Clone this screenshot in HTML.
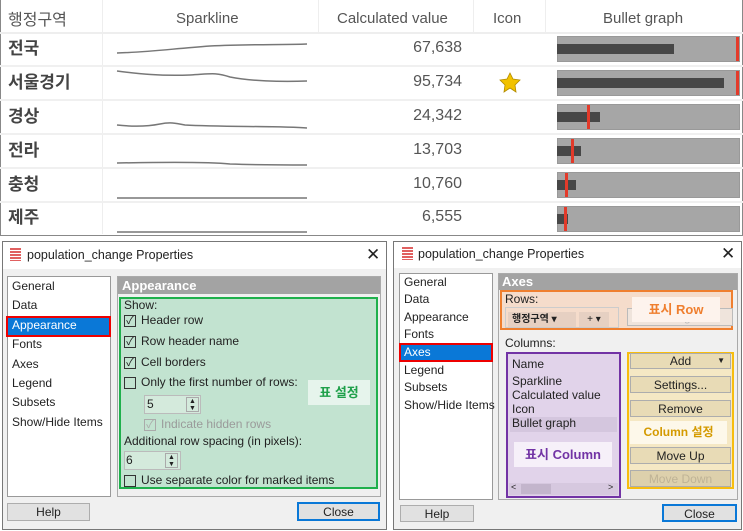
<!DOCTYPE html>
<html><head><meta charset="utf-8"><style>
*{box-sizing:border-box;margin:0;padding:0}
body{width:743px;height:531px;background:#fff;position:relative;overflow:hidden;font-family:"Liberation Sans","Noto Sans CJK KR",sans-serif;font-size:12px;color:#222}
.a{position:absolute}
.t{position:absolute;white-space:nowrap;line-height:1}
.hd{font-size:15px;color:#555;font-family:"Liberation Sans Narrow","Liberation Sans",sans-serif}
.rh{font-size:17px;font-weight:bold;color:#444;font-family:"Noto Sans CJK KR",sans-serif}
.val{font-size:16px;color:#555;text-align:right;width:120px;left:342px}
.bg{position:absolute;left:557px;width:183px;height:26px;background:#a6a6a6;border:1px solid #999}
.bar{position:absolute;left:557px;height:10px;background:#474747}
.red{position:absolute;width:3px;height:24px;background:#e33a2a}
.win{position:absolute;border:1px solid #777;background:#f0f0f0}
.list{position:absolute;background:#fff;border:1px solid #999}
.btn{position:absolute;background:#e1e1e1;border:1px solid #adadad;text-align:center;font-size:12px;line-height:16px}
.cb{position:absolute;width:12px;height:12px;border:1px solid #333;background:transparent;font-size:11px;line-height:10px;text-align:center}
</style></head><body>
<!-- top table -->
<div class="a" style="left:0;top:0;width:743px;height:236px;border:1px solid #888;border-top:none"></div>
<div class="a" style="left:102px;top:0;width:1px;height:234px;background:#eee"></div>
<div class="a" style="left:318px;top:0;width:1px;height:32px;background:#eee"></div>
<div class="a" style="left:473px;top:0;width:1px;height:32px;background:#eee"></div>
<div class="a" style="left:545px;top:0;width:1px;height:32px;background:#eee"></div>
<div class="a" style="left:0;top:32px;width:743px;height:2px;background:#eee"></div>
<div class="a" style="left:0;top:65px;width:743px;height:2px;background:#f0f0f0"></div>
<div class="a" style="left:0;top:99px;width:743px;height:2px;background:#f0f0f0"></div>
<div class="a" style="left:0;top:133px;width:743px;height:2px;background:#f0f0f0"></div>
<div class="a" style="left:0;top:167px;width:743px;height:2px;background:#f0f0f0"></div>
<div class="a" style="left:0;top:201px;width:743px;height:2px;background:#f0f0f0"></div>
<div class="t rh" style="left:8px;top:10px;font-weight:normal;color:#555;font-size:16px">행정구역</div>
<div class="t hd" style="left:176px;top:11px">Sparkline</div>
<div class="t hd" style="left:337px;top:11px">Calculated value</div>
<div class="t hd" style="left:493px;top:11px">Icon</div>
<div class="t hd" style="left:603px;top:11px">Bullet graph</div>
<div class="t rh" style="left:8px;top:38px">전국</div>
<div class="t rh" style="left:8px;top:72px">서울경기</div>
<div class="t rh" style="left:8px;top:106px">경상</div>
<div class="t rh" style="left:8px;top:140px">전라</div>
<div class="t rh" style="left:8px;top:174px">충청</div>
<div class="t rh" style="left:8px;top:207px">제주</div>
<div class="t val" style="top:40px">67,638</div>
<div class="t val" style="top:74px">95,734</div>
<div class="t val" style="top:108px">24,342</div>
<div class="t val" style="top:142px">13,703</div>
<div class="t val" style="top:176px">10,760</div>
<div class="t val" style="top:209px">6,555</div>
<svg class="a" style="left:0;top:0" width="743" height="236">
<g fill="none" stroke="#777" stroke-width="1.5">
<path d="M117 53 C150 52 170 49 210 46 C250 44 280 45 307 44"/>
<path d="M117 71 C140 74 160 76 190 75 C210 74 215 72 230 77 C250 81 280 82 307 81"/>
<path d="M117 125 C135 127 150 126 160 124 C170 122 175 123 185 125 C220 127 280 126 307 128"/>
<path d="M117 163 C170 162 210 162 230 164 C260 165 290 165 307 165"/>
<path d="M117 198 L307 198"/>
<path d="M117 232 L307 232"/>
</g>
<path d="M510 73 L513 79 L520 80 L515 85 L516 92 L510 88 L504 92 L505 85 L500 80 L507 79Z" fill="#f2c200" stroke="#b08a00" stroke-width="0.8"/>
</svg>
<div class="bg" style="top:36px"></div><div class="bar" style="top:44px;width:117px"></div><div class="red" style="left:736px;top:37px"></div>
<div class="bg" style="top:70px"></div><div class="bar" style="top:78px;width:167px"></div><div class="red" style="left:736px;top:71px"></div>
<div class="bg" style="top:104px"></div><div class="bar" style="top:112px;width:43px"></div><div class="red" style="left:587px;top:105px"></div>
<div class="bg" style="top:138px"></div><div class="bar" style="top:146px;width:24px"></div><div class="red" style="left:571px;top:139px"></div>
<div class="bg" style="top:172px"></div><div class="bar" style="top:180px;width:19px"></div><div class="red" style="left:565px;top:173px"></div>
<div class="bg" style="top:206px"></div><div class="bar" style="top:214px;width:11px"></div><div class="red" style="left:564px;top:207px"></div>

<!-- dialog 1 -->
<div class="win" style="left:2px;top:241px;width:385px;height:289px"></div>
<div class="a" style="left:3px;top:242px;width:383px;height:27px;background:#fff"></div>
<div class="a" style="left:10px;top:248px;width:11px;height:13px;background:repeating-linear-gradient(#e06060 0 2px,#fff 2px 3px)"></div>
<div class="t" style="left:27px;top:249px;font-size:12.5px">population_change Properties</div>
<div class="t" style="left:366px;top:246px;font-size:17px">✕</div>
<div class="list" style="left:7px;top:276px;width:104px;height:221px"></div>
<div class="a" style="left:6px;top:316px;width:105px;height:21px;background:#0a78d7;border:2px solid #e00"></div>
<div class="t" style="left:12px;top:280px">General</div>
<div class="t" style="left:12px;top:299px">Data</div>
<div class="t" style="left:12px;top:319px;color:#fff">Appearance</div>
<div class="t" style="left:12px;top:338px">Fonts</div>
<div class="t" style="left:12px;top:358px">Axes</div>
<div class="t" style="left:12px;top:377px">Legend</div>
<div class="t" style="left:12px;top:396px">Subsets</div>
<div class="t" style="left:12px;top:416px">Show/Hide Items</div>
<div class="a" style="left:117px;top:276px;width:264px;height:221px;border:1px solid #aaa;background:#f0f0f0"></div>
<div class="a" style="left:118px;top:277px;width:262px;height:17px;background:#a3a3a3"></div>
<div class="t" style="left:122px;top:279px;color:#fff;font-weight:bold;font-size:13px">Appearance</div>
<div class="a" style="left:119px;top:297px;width:259px;height:192px;background:#c2e3d0;border:2px solid #1fb04c"></div>
<div class="t" style="left:124px;top:299px">Show:</div>
<div class="cb" style="left:124px;top:315px">✓</div><div class="t" style="left:141px;top:314px">Header row</div>
<div class="cb" style="left:124px;top:336px">✓</div><div class="t" style="left:141px;top:335px">Row header name</div>
<div class="cb" style="left:124px;top:357px">✓</div><div class="t" style="left:141px;top:356px">Cell borders</div>
<div class="cb" style="left:124px;top:377px"></div><div class="t" style="left:141px;top:376px">Only the first number of rows:</div>
<div class="a" style="left:144px;top:395px;width:57px;height:19px;border:1px solid #bbb;background:#d4eadc"></div>
<div class="t" style="left:147px;top:398px">5</div>
<div class="a" style="left:186px;top:397px;width:13px;height:15px;border:1px solid #aaa;font-size:7px;line-height:7px;text-align:center">▲<br>▼</div>
<div class="cb" style="left:144px;top:419px;border-color:#aaa;color:#aaa">✓</div><div class="t" style="left:161px;top:418px;color:#9a9a9a">Indicate hidden rows</div>
<div class="t" style="left:124px;top:435px">Additional row spacing (in pixels):</div>
<div class="a" style="left:124px;top:451px;width:57px;height:19px;border:1px solid #bbb;background:#d4eadc"></div>
<div class="t" style="left:126px;top:454px">6</div>
<div class="a" style="left:165px;top:453px;width:13px;height:15px;border:1px solid #aaa;font-size:7px;line-height:7px;text-align:center">▲<br>▼</div>
<div class="cb" style="left:124px;top:475px"></div><div class="t" style="left:141px;top:474px">Use separate color for marked items</div>
<div class="a" style="left:308px;top:380px;width:62px;height:25px;background:#e6f4ec;color:#1fa04a;font-weight:bold;font-size:13px;text-align:center;line-height:25px">표 설정</div>
<div class="btn" style="left:7px;top:503px;width:83px;height:18px">Help</div>
<div class="btn" style="left:297px;top:502px;width:83px;height:19px;border:2px solid #0a78d7">Close</div>

<!-- dialog 2 -->
<div class="win" style="left:393px;top:241px;width:349px;height:289px"></div>
<div class="a" style="left:394px;top:242px;width:347px;height:26px;background:#fff"></div>
<div class="a" style="left:402px;top:247px;width:11px;height:13px;background:repeating-linear-gradient(#e06060 0 2px,#fff 2px 3px)"></div>
<div class="t" style="left:418px;top:248px;font-size:12.5px">population_change Properties</div>
<div class="t" style="left:721px;top:245px;font-size:17px">✕</div>
<div class="list" style="left:399px;top:273px;width:94px;height:227px"></div>
<div class="a" style="left:399px;top:343px;width:94px;height:19px;background:#0a78d7;border:2px solid #e00"></div>
<div class="t" style="left:404px;top:276px">General</div>
<div class="t" style="left:404px;top:293px">Data</div>
<div class="t" style="left:404px;top:311px">Appearance</div>
<div class="t" style="left:404px;top:328px">Fonts</div>
<div class="t" style="left:404px;top:346px;color:#fff">Axes</div>
<div class="t" style="left:404px;top:364px">Legend</div>
<div class="t" style="left:404px;top:381px">Subsets</div>
<div class="t" style="left:404px;top:399px">Show/Hide Items</div>
<div class="a" style="left:498px;top:273px;width:240px;height:227px;border:1px solid #aaa"></div>
<div class="a" style="left:499px;top:274px;width:238px;height:16px;background:#a3a3a3"></div>
<div class="t" style="left:502px;top:275px;color:#fff;font-weight:bold;font-size:13px">Axes</div>
<div class="a" style="left:500px;top:290px;width:233px;height:40px;background:#f5dccb;border:2px solid #ef7f2f"></div>
<div class="t" style="left:505px;top:293px">Rows:</div>
<div class="a" style="left:505px;top:307px;width:114px;height:21px;border:1px solid #ccc"></div>
<div class="a" style="left:508px;top:312px;width:68px;height:15px;background:#e6d0c2;font-size:10px;font-weight:bold;padding-left:4px;line-height:15px">행정구역 ▾</div>
<div class="a" style="left:579px;top:312px;width:30px;height:15px;background:#e6d0c2;font-size:10px;text-align:center;line-height:15px">+ ▾</div>
<div class="a" style="left:627px;top:308px;width:106px;height:18px;border:1px solid #bbb;background:#efe4dc;color:#bbb;text-align:center;line-height:17px">Settings...</div>
<div class="a" style="left:632px;top:297px;width:88px;height:25px;background:#fdf3ed;color:#ef7f2f;font-weight:bold;font-size:13px;text-align:center;line-height:25px">표시 Row</div>
<div class="t" style="left:505px;top:337px">Columns:</div>
<div class="a" style="left:506px;top:352px;width:115px;height:146px;background:#e1d3ea;border:2px solid #7233a5"></div>
<div class="a" style="left:510px;top:417px;width:107px;height:15px;background:#d4c6de"></div>
<div class="t" style="left:512px;top:358px">Name</div>
<div class="t" style="left:512px;top:375px">Sparkline</div>
<div class="t" style="left:512px;top:389px">Calculated value</div>
<div class="t" style="left:512px;top:403px">Icon</div>
<div class="t" style="left:512px;top:417px">Bullet graph</div>
<div class="a" style="left:514px;top:442px;width:98px;height:25px;background:#f6f0f9;color:#7233a5;font-weight:bold;font-size:13px;text-align:center;line-height:25px">표시 Column</div>
<div class="a" style="left:509px;top:483px;width:109px;height:12px;background:#d6c8df"></div>
<div class="a" style="left:521px;top:484px;width:30px;height:10px;background:#c3b5cc"></div>
<div class="t" style="left:511px;top:483px;font-size:9px">&lt;</div>
<div class="t" style="left:608px;top:483px;font-size:9px">&gt;</div>
<div class="a" style="left:627px;top:352px;width:107px;height:137px;background:#f5e8c4;border:2px solid #f7bd0f"></div>
<div class="btn" style="left:630px;top:353px;width:101px;height:16px;background:#e8dbb6;line-height:14px">Add<span style="position:absolute;right:5px;font-size:8px">▼</span></div>
<div class="btn" style="left:630px;top:376px;width:101px;height:17px;background:#e8dbb6">Settings...</div>
<div class="btn" style="left:630px;top:400px;width:101px;height:17px;background:#e8dbb6">Remove</div>
<div class="a" style="left:630px;top:421px;width:97px;height:23px;background:#fdf8ea;color:#d49a00;font-weight:bold;font-size:12px;text-align:center;line-height:23px">Column 설정</div>
<div class="btn" style="left:630px;top:447px;width:101px;height:17px;background:#e8dbb6">Move Up</div>
<div class="btn" style="left:630px;top:470px;width:101px;height:17px;background:#ddd0ac;color:#bfb396">Move Down</div>
<div class="btn" style="left:400px;top:505px;width:74px;height:17px">Help</div>
<div class="btn" style="left:662px;top:504px;width:75px;height:18px;border:2px solid #0a78d7">Close</div>
</body></html>
